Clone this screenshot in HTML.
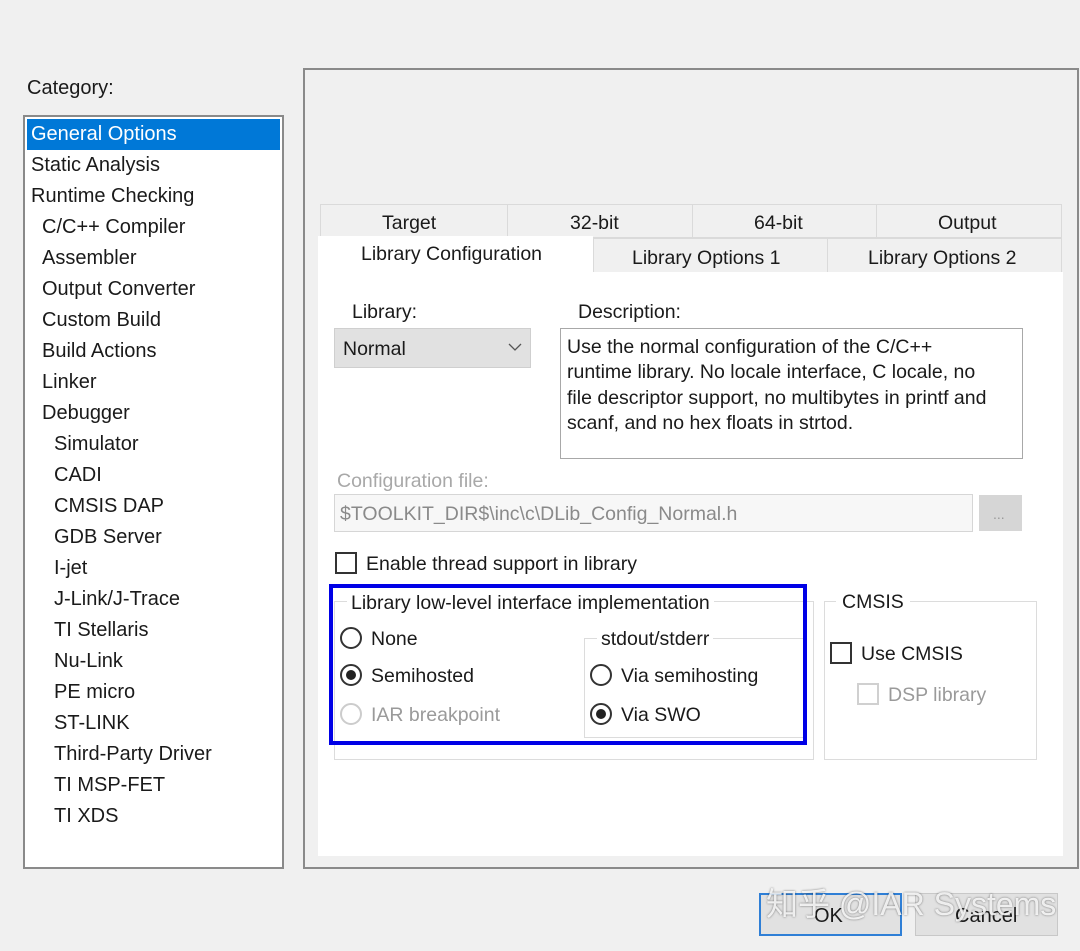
<!DOCTYPE html>
<html><head><meta charset="utf-8"><style>
body{margin:0;width:1080px;height:951px;background:#f0f0f0;position:relative;overflow:hidden;font-family:"Liberation Sans","Noto Sans CJK SC",sans-serif;color:#1a1a1a;}
.a{position:absolute;white-space:nowrap;}
.t{font-size:20px;line-height:24px;}
.r{font-size:19.5px;line-height:24px;}
.li{position:absolute;font-size:20px;line-height:31px;white-space:nowrap;}
.g{color:#9a9a9a;}
.rad{position:absolute;width:22px;height:22px;border:2px solid #333;border-radius:50%;box-sizing:border-box;background:#fff;}
.rad.on::after{content:"";position:absolute;left:4px;top:4px;width:10px;height:10px;border-radius:50%;background:#222;}
.rad.dis{border-color:#ccc;}
.chk{position:absolute;width:22px;height:22px;border:2px solid #333;box-sizing:border-box;background:#fff;}
.box{position:absolute;border:1px solid #dcdcdc;box-sizing:border-box;}
</style></head><body>
<div class="a t" style="left:27px;top:76px;">Category:</div>
<div class="a" style="left:23px;top:115px;width:261px;height:754px;border:2px solid #8a8a8a;box-sizing:border-box;background:#fff;"></div>
<div class="a" style="left:27px;top:119px;width:253px;height:31px;background:#0078d7;"></div>
<div class="li" style="left:31px;top:119px;color:#fff;">General Options</div>
<div class="li" style="left:31px;top:150px;">Static Analysis</div>
<div class="li" style="left:31px;top:181px;">Runtime Checking</div>
<div class="li" style="left:42px;top:212px;">C/C++ Compiler</div>
<div class="li" style="left:42px;top:243px;">Assembler</div>
<div class="li" style="left:42px;top:274px;">Output Converter</div>
<div class="li" style="left:42px;top:305px;">Custom Build</div>
<div class="li" style="left:42px;top:336px;">Build Actions</div>
<div class="li" style="left:42px;top:367px;">Linker</div>
<div class="li" style="left:42px;top:398px;">Debugger</div>
<div class="li" style="left:54px;top:429px;">Simulator</div>
<div class="li" style="left:54px;top:460px;">CADI</div>
<div class="li" style="left:54px;top:491px;">CMSIS DAP</div>
<div class="li" style="left:54px;top:522px;">GDB Server</div>
<div class="li" style="left:54px;top:553px;">I-jet</div>
<div class="li" style="left:54px;top:584px;">J-Link/J-Trace</div>
<div class="li" style="left:54px;top:615px;">TI Stellaris</div>
<div class="li" style="left:54px;top:646px;">Nu-Link</div>
<div class="li" style="left:54px;top:677px;">PE micro</div>
<div class="li" style="left:54px;top:708px;">ST-LINK</div>
<div class="li" style="left:54px;top:739px;">Third-Party Driver</div>
<div class="li" style="left:54px;top:770px;">TI MSP-FET</div>
<div class="li" style="left:54px;top:801px;">TI XDS</div>

<div class="a" style="left:303px;top:68px;width:776px;height:801px;border:2px solid #8a8a8a;box-sizing:border-box;background:#f0f0f0;"></div>
<div class="a" style="left:320px;top:204px;width:742px;height:34px;background:#f0f0f0;border:1px solid #dadada;box-sizing:border-box;"></div>
<div class="a" style="left:507px;top:204px;width:1px;height:34px;background:#dadada;"></div>
<div class="a" style="left:692px;top:204px;width:1px;height:34px;background:#dadada;"></div>
<div class="a" style="left:876px;top:204px;width:1px;height:34px;background:#dadada;"></div>
<div class="a r" style="left:382px;top:211px;">Target</div>
<div class="a r" style="left:570px;top:211px;">32-bit</div>
<div class="a r" style="left:754px;top:211px;">64-bit</div>
<div class="a r" style="left:938px;top:211px;">Output</div>
<div class="a" style="left:593px;top:238px;width:469px;height:35px;background:#f0f0f0;border:1px solid #dadada;box-sizing:border-box;"></div>
<div class="a" style="left:827px;top:238px;width:1px;height:35px;background:#dadada;"></div>
<div class="a r" style="left:632px;top:246px;">Library Options 1</div>
<div class="a r" style="left:868px;top:246px;">Library Options 2</div>
<div class="a" style="left:318px;top:272px;width:745px;height:584px;background:#fff;"></div>
<div class="a" style="left:318px;top:236px;width:275px;height:40px;background:#fff;"></div>
<div class="a r" style="left:361px;top:242px;">Library Configuration</div>

<div class="a r" style="left:352px;top:300px;">Library:</div>
<div class="a r" style="left:578px;top:300px;">Description:</div>
<div class="a" style="left:334px;top:328px;width:197px;height:40px;background:#e1e1e1;border:1px solid #cfcfcf;box-sizing:border-box;"></div>
<div class="a r" style="left:343px;top:337px;">Normal</div>
<svg class="a" style="left:508px;top:342px;" width="14" height="10"><path d="M1 2 L7 8 L13 2" fill="none" stroke="#555" stroke-width="1.3"/></svg>
<div class="a" style="left:560px;top:328px;width:463px;height:131px;border:1px solid #a8a8a8;box-sizing:border-box;background:#fff;"></div>
<div class="a" style="left:567px;top:335px;font-size:19.5px;line-height:25.3px;white-space:normal;width:455px;">Use the normal configuration of the C/C++<br>runtime library. No locale interface, C locale, no<br>file descriptor support, no multibytes in printf and<br>scanf, and no hex floats in strtod.</div>

<div class="a r g" style="left:337px;top:469px;color:#a8a8a8;">Configuration file:</div>
<div class="a" style="left:334px;top:494px;width:639px;height:38px;border:1px solid #d6d6d6;box-sizing:border-box;background:#f7f7f7;"></div>
<div class="a r" style="left:340px;top:502px;color:#8a8a8a;">$TOOLKIT_DIR$\inc\c\DLib_Config_Normal.h</div>
<div class="a" style="left:979px;top:495px;width:43px;height:36px;background:#d6d6d6;"></div>
<div class="a" style="left:993px;top:506px;color:#999;font-size:14px;">...</div>

<div class="chk" style="left:335px;top:552px;"></div>
<div class="a r" style="left:366px;top:552px;">Enable thread support in library</div>

<div class="box" style="left:334px;top:601px;width:480px;height:159px;"></div>
<div class="box" style="left:584px;top:638px;width:220px;height:100px;border-right:none;"></div>
<div class="box" style="left:824px;top:601px;width:213px;height:159px;"></div>
<div class="a" style="left:329px;top:584px;width:478px;height:161px;border:4px solid #0000e6;box-sizing:border-box;"></div>
<div class="a" style="left:347px;top:592px;background:#fff;padding:0 4px;font-size:19.5px;line-height:22px;">Library low-level interface implementation</div>
<div class="a" style="left:597px;top:628px;background:#fff;padding:0 4px;font-size:19.5px;line-height:22px;">stdout/stderr</div>
<div class="a" style="left:836px;top:591px;background:#fff;padding:0 6px;font-size:19.5px;line-height:22px;">CMSIS</div>

<div class="rad" style="left:340px;top:627px;"></div><div class="a r" style="left:371px;top:627px;">None</div>
<div class="rad on" style="left:340px;top:664px;"></div><div class="a r" style="left:371px;top:664px;">Semihosted</div>
<div class="rad dis" style="left:340px;top:703px;"></div><div class="a r" style="left:371px;top:703px;color:#9a9a9a;">IAR breakpoint</div>
<div class="rad" style="left:590px;top:664px;"></div><div class="a r" style="left:621px;top:664px;">Via semihosting</div>
<div class="rad on" style="left:590px;top:703px;"></div><div class="a r" style="left:621px;top:703px;">Via SWO</div>

<div class="chk" style="left:830px;top:642px;"></div><div class="a r" style="left:861px;top:642px;">Use CMSIS</div>
<div class="chk" style="left:857px;top:683px;border-color:#d0d0d0;"></div><div class="a r" style="left:888px;top:683px;color:#9a9a9a;">DSP library</div>

<div class="a" style="left:759px;top:893px;width:143px;height:43px;border:2px solid #2f7fd6;box-sizing:border-box;background:#e1e1e1;"></div>
<div class="a t" style="left:814px;top:904px;">OK</div>
<div class="a" style="left:915px;top:893px;width:143px;height:43px;border:1px solid #c8c8c8;box-sizing:border-box;background:#e1e1e1;"></div>
<div class="a t" style="left:955px;top:904px;">Cancel</div>
<div class="a" style="left:766px;top:884px;font-size:32px;line-height:40px;color:rgba(255,255,255,0.85);text-shadow:0 0 2px rgba(0,0,0,0.5);">知乎 @IAR Systems</div>
</body></html>
